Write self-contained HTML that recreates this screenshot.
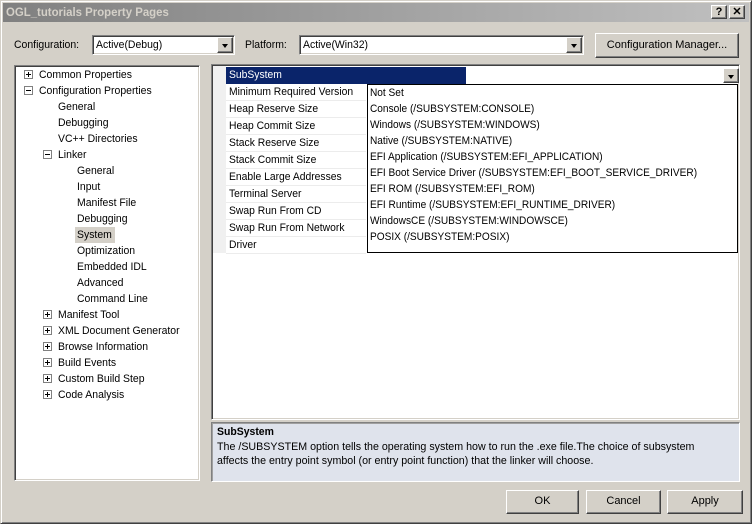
<!DOCTYPE html>
<html><head><meta charset="utf-8"><style>
*{margin:0;padding:0;box-sizing:border-box}
body{width:752px;height:524px;background:#d4d0c8;font-family:"Liberation Sans",sans-serif;font-size:11px;color:#000;position:relative;overflow:hidden}
.a{position:absolute}
.sunk{border:1px solid;border-color:#808080 #fff #fff #808080;box-shadow:inset 1px 1px 0 #404040,inset -1px -1px 0 #d4d0c8}
.btn{position:absolute;background:#d4d0c8;border:1px solid;border-color:#fff #404040 #404040 #fff;box-shadow:inset -1px -1px 0 #808080;text-align:center}
.arr{position:absolute;width:16px;background:#d4d0c8;border:1px solid;border-color:#fff #404040 #404040 #fff;box-shadow:inset -1px -1px 0 #808080}
.arr:after{content:"";position:absolute;left:4px;top:6px;border:3.5px solid transparent;border-top:4px solid #000;border-bottom:0}
.t{position:absolute;white-space:nowrap;line-height:16px;transform:scaleX(.95);transform-origin:0 0}
.pm{position:absolute;width:9px;height:9px;border:1px solid #808080;background:#fff}
.pm:before{content:"";position:absolute;left:1px;top:3px;width:5px;height:1px;background:#000}
.pm.p:after{content:"";position:absolute;left:3px;top:1px;width:1px;height:5px;background:#000}
.row{position:absolute;left:226px;width:140px;height:17px;border-bottom:1px solid #ececec;padding-left:3px;line-height:16px}
.row span,.sel span{display:inline-block;transform:scaleX(.94);transform-origin:0 0;white-space:nowrap}
.dd{position:absolute;left:2px;line-height:16px;white-space:nowrap;transform:scaleX(.92);transform-origin:0 0}
</style></head><body>
<div class="a" style="left:0;top:0;width:752px;height:524px;border:1px solid;border-color:#d4d0c8 #404040 #404040 #d4d0c8;box-shadow:inset 1px 1px 0 #fff,inset -1px -1px 0 #808080"></div>
<div class="a" style="left:3px;top:3px;width:746px;height:19px;background:linear-gradient(90deg,#808080,#c0c0c0)"></div>
<div class="t" style="left:6px;top:4px;color:#d4d0c8;font-weight:bold;font-size:12px">OGL_tutorials Property Pages</div>
<div class="btn" style="left:711px;top:5px;width:16px;height:14px;font-weight:bold;line-height:12px">?</div>
<div class="btn" style="left:729px;top:5px;width:16px;height:14px;font-weight:bold;line-height:12px">✕</div>

<div class="t" style="left:14px;top:37px">Configuration:</div>
<div class="a sunk" style="left:92px;top:35px;width:143px;height:20px;background:#fff"></div>
<div class="t" style="left:96px;top:37px">Active(Debug)</div>
<div class="arr" style="left:217px;top:37px;height:16px"></div>
<div class="t" style="left:245px;top:37px">Platform:</div>
<div class="a sunk" style="left:299px;top:35px;width:285px;height:20px;background:#fff"></div>
<div class="t" style="left:303px;top:37px">Active(Win32)</div>
<div class="arr" style="left:566px;top:37px;height:16px"></div>
<div class="btn" style="left:595px;top:33px;width:144px;height:25px;line-height:22px">Configuration Manager...</div>

<div class="a sunk" style="left:14px;top:65px;width:186px;height:416px;background:#fff"></div>
<div class="pm p" style="left:24px;top:70px"></div><div class="t" style="left:39px;top:67px">Common Properties</div>
<div class="pm" style="left:24px;top:86px"></div><div class="t" style="left:39px;top:83px">Configuration Properties</div>
<div class="t" style="left:58px;top:99px">General</div>
<div class="t" style="left:58px;top:115px">Debugging</div>
<div class="t" style="left:58px;top:131px">VC++ Directories</div>
<div class="pm" style="left:43px;top:150px"></div><div class="t" style="left:58px;top:147px">Linker</div>
<div class="t" style="left:77px;top:163px">General</div>
<div class="t" style="left:77px;top:179px">Input</div>
<div class="t" style="left:77px;top:195px">Manifest File</div>
<div class="t" style="left:77px;top:211px">Debugging</div>
<div class="a" style="left:75px;top:227px;width:40px;height:16px;background:#d4d0c8"></div>
<div class="t" style="left:77px;top:227px">System</div>
<div class="t" style="left:77px;top:243px">Optimization</div>
<div class="t" style="left:77px;top:259px">Embedded IDL</div>
<div class="t" style="left:77px;top:275px">Advanced</div>
<div class="t" style="left:77px;top:291px">Command Line</div>
<div class="pm p" style="left:43px;top:310px"></div><div class="t" style="left:58px;top:307px">Manifest Tool</div>
<div class="pm p" style="left:43px;top:326px"></div><div class="t" style="left:58px;top:323px">XML Document Generator</div>
<div class="pm p" style="left:43px;top:342px"></div><div class="t" style="left:58px;top:339px">Browse Information</div>
<div class="pm p" style="left:43px;top:358px"></div><div class="t" style="left:58px;top:355px">Build Events</div>
<div class="pm p" style="left:43px;top:374px"></div><div class="t" style="left:58px;top:371px">Custom Build Step</div>
<div class="pm p" style="left:43px;top:390px"></div><div class="t" style="left:58px;top:387px">Code Analysis</div>

<div class="a sunk" style="left:211px;top:64px;width:529px;height:356px;background:#fff"></div>
<div class="a" style="left:213px;top:66px;width:13px;height:187px;background:#f0f0f0"></div>
<div class="a sel" style="left:226px;top:67px;width:240px;height:17px;background:#0a246a;color:#fff;padding-left:3px;line-height:16px"><span>SubSystem</span></div>
<div class="arr" style="left:723px;top:68px;height:15px"></div>
<div class="row" style="top:84px"><span>Minimum Required Version</span></div>
<div class="row" style="top:101px"><span>Heap Reserve Size</span></div>
<div class="row" style="top:118px"><span>Heap Commit Size</span></div>
<div class="row" style="top:135px"><span>Stack Reserve Size</span></div>
<div class="row" style="top:152px"><span>Stack Commit Size</span></div>
<div class="row" style="top:169px"><span>Enable Large Addresses</span></div>
<div class="row" style="top:186px"><span>Terminal Server</span></div>
<div class="row" style="top:203px"><span>Swap Run From CD</span></div>
<div class="row" style="top:220px"><span>Swap Run From Network</span></div>
<div class="row" style="top:237px"><span>Driver</span></div>
<div class="a" style="left:367px;top:84px;width:371px;height:169px;background:#fff;border:1px solid #000">
<div class="dd" style="top:0">Not Set</div>
<div class="dd" style="top:16px">Console (/SUBSYSTEM:CONSOLE)</div>
<div class="dd" style="top:32px">Windows (/SUBSYSTEM:WINDOWS)</div>
<div class="dd" style="top:48px">Native (/SUBSYSTEM:NATIVE)</div>
<div class="dd" style="top:64px">EFI Application (/SUBSYSTEM:EFI_APPLICATION)</div>
<div class="dd" style="top:80px">EFI Boot Service Driver (/SUBSYSTEM:EFI_BOOT_SERVICE_DRIVER)</div>
<div class="dd" style="top:96px">EFI ROM (/SUBSYSTEM:EFI_ROM)</div>
<div class="dd" style="top:112px">EFI Runtime (/SUBSYSTEM:EFI_RUNTIME_DRIVER)</div>
<div class="dd" style="top:128px">WindowsCE (/SUBSYSTEM:WINDOWSCE)</div>
<div class="dd" style="top:144px">POSIX (/SUBSYSTEM:POSIX)</div>
</div>

<div class="a" style="left:211px;top:422px;width:529px;height:60px;background:#dfe3ec;border:1px solid;border-color:#808080 #fff #fff #808080;box-shadow:inset 1px 1px 0 #a0a0a0"></div>
<div class="t" style="left:217px;top:424px;font-weight:bold">SubSystem</div>
<div class="t" style="left:217px;top:440px;line-height:14px;transform:scaleX(.97)">The /SUBSYSTEM option tells the operating system how to run the .exe file.The choice of subsystem<br>affects the entry point symbol (or entry point function) that the linker will choose.</div>

<div class="btn" style="left:506px;top:490px;width:73px;height:24px;line-height:21px">OK</div>
<div class="btn" style="left:586px;top:490px;width:75px;height:24px;line-height:21px">Cancel</div>
<div class="btn" style="left:667px;top:490px;width:76px;height:24px;line-height:21px">Apply</div>
</body></html>
